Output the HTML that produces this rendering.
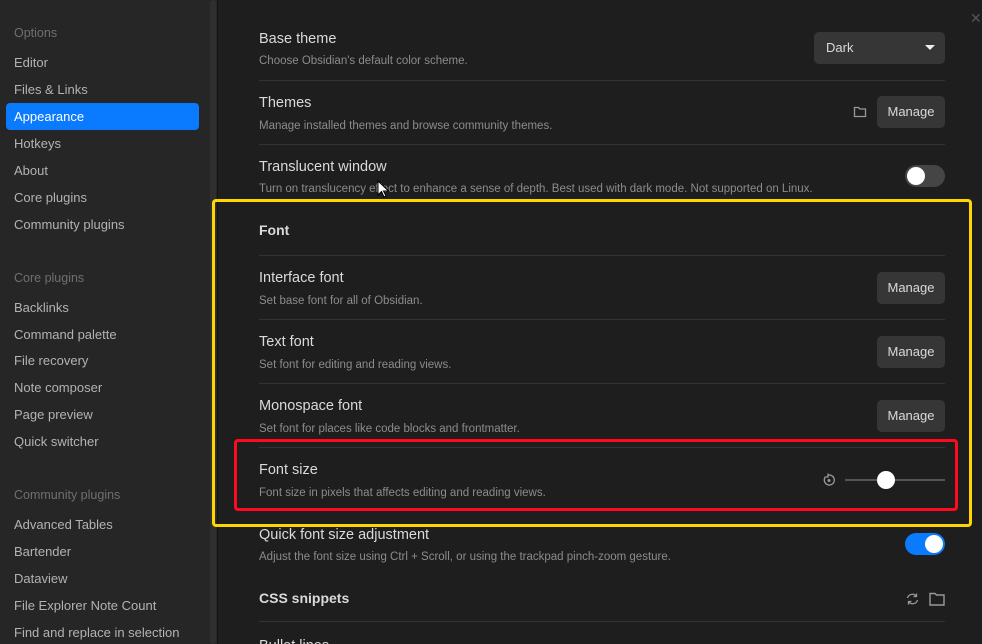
<!DOCTYPE html>
<html style="width:982px;height:644px;overflow:hidden"><head><meta charset="utf-8"><style>
*{margin:0;padding:0;box-sizing:border-box}
body{width:982px;height:644px;overflow:hidden;background:#1e1e1e;font-family:"Liberation Sans",sans-serif;position:relative}
#side{position:absolute;left:0;top:0;width:218px;height:644px;background:#262626;border-right:1px solid #141414}
#sb{position:absolute;left:210px;top:0;width:6px;height:644px;background:#2f2f2f;border-radius:3px}
.si{position:absolute;left:14px;font-size:13px;color:#b3b3b3;line-height:16px;transform:translateY(-7px);white-space:nowrap}
.sh{color:#6f6f6f;font-size:12.5px}
#hl{position:absolute;left:6px;top:103px;width:193px;height:27px;background:#0a7aff;border-radius:4px}
.t{position:absolute;left:259px;font-size:14.5px;color:#dadada;line-height:18px;transform:translateY(-8px);white-space:nowrap}
.d{position:absolute;left:259px;font-size:11.5px;color:#8c8c8c;line-height:14px;transform:translateY(-5px);white-space:nowrap}
.hr{position:absolute;left:259px;width:686px;height:1px;background:#333}
.btn{position:absolute;left:877px;width:68px;height:32px;background:#363636;border-radius:5px;color:#dadada;font-size:13px;line-height:32px;text-align:center}
.tog{position:absolute;left:905px;width:40px;height:22px;border-radius:11px;background:#454545}
.tog i{position:absolute;top:2px;width:18px;height:18px;border-radius:50%;background:#fff}
</style></head><body>
<div id="side"></div><div id="sb"></div>
<div id="hl"></div>
<div class="si sh" style="top:32px">Options</div>
<div class="si" style="top:62px">Editor</div>
<div class="si" style="top:89px">Files &amp; Links</div>
<div class="si" style="top:116px;color:#fff">Appearance</div>
<div class="si" style="top:143px">Hotkeys</div>
<div class="si" style="top:170px">About</div>
<div class="si" style="top:197px">Core plugins</div>
<div class="si" style="top:224px">Community plugins</div>
<div class="si sh" style="top:277px">Core plugins</div>
<div class="si" style="top:307px">Backlinks</div>
<div class="si" style="top:334px">Command palette</div>
<div class="si" style="top:360px">File recovery</div>
<div class="si" style="top:387px">Note composer</div>
<div class="si" style="top:414px">Page preview</div>
<div class="si" style="top:441px">Quick switcher</div>
<div class="si sh" style="top:494px">Community plugins</div>
<div class="si" style="top:524px">Advanced Tables</div>
<div class="si" style="top:551px">Bartender</div>
<div class="si" style="top:578px">Dataview</div>
<div class="si" style="top:605px">File Explorer Note Count</div>
<div class="si" style="top:632px">Find and replace in selection</div>

<div style="position:absolute;left:970px;top:10px;color:#555;font-size:14px">✕</div>

<div class="t" style="top:38px">Base theme</div>
<div class="d" style="top:59px">Choose Obsidian's default color scheme.</div>
<div style="position:absolute;left:814px;top:32px;width:131px;height:32px;background:#363636;border-radius:5px;color:#dadada;font-size:13px;line-height:32px;padding-left:12px">Dark<span style="position:absolute;right:10px;top:13px;border-left:5px solid transparent;border-right:5px solid transparent;border-top:5px solid #eee"></span></div>
<div class="hr" style="top:80px"></div>
<div class="t" style="top:102px">Themes</div>
<div class="d" style="top:124px">Manage installed themes and browse community themes.</div>
<svg style="position:absolute;left:853px;top:105px" width="14" height="13" viewBox="0 0 14 13"><path d="M1.5 2.5h4l1.5 1.5h5.5v7.5h-11z" fill="none" stroke="#999" stroke-width="1.3"/></svg>
<div class="btn" style="top:96px">Manage</div>
<div class="hr" style="top:144px"></div>
<div class="t" style="top:166px">Translucent window</div>
<div class="d" style="top:187px">Turn on translucency effect to enhance a sense of depth. Best used with dark mode. Not supported on Linux.</div>
<div class="tog" style="top:165px"><i style="left:2px"></i></div>

<div class="t" style="top:229px;font-weight:bold;font-size:14px">Font</div>
<div class="hr" style="top:255px"></div>
<div class="t" style="top:277px">Interface font</div>
<div class="d" style="top:299px">Set base font for all of Obsidian.</div>
<div class="btn" style="top:272px">Manage</div>
<div class="hr" style="top:319px"></div>
<div class="t" style="top:341px">Text font</div>
<div class="d" style="top:363px">Set font for editing and reading views.</div>
<div class="btn" style="top:336px">Manage</div>
<div class="hr" style="top:383px"></div>
<div class="t" style="top:405px">Monospace font</div>
<div class="d" style="top:427px">Set font for places like code blocks and frontmatter.</div>
<div class="btn" style="top:400px">Manage</div>
<div class="hr" style="top:447px"></div>
<div class="t" style="top:469px">Font size</div>
<div class="d" style="top:491px">Font size in pixels that affects editing and reading views.</div>
<svg style="position:absolute;left:822px;top:473px" width="14" height="14" viewBox="0 0 14 14"><path d="M3 4.5A5 5 0 1 0 6 2.2" fill="none" stroke="#999" stroke-width="1.3"/><path d="M6 0.5v3.5h-3.5" fill="none" stroke="#999" stroke-width="1.3"/><circle cx="7" cy="7.5" r="1.5" fill="#999"/></svg>
<div style="position:absolute;left:845px;top:479px;width:100px;height:2px;background:#555"></div>
<div style="position:absolute;left:877px;top:471px;width:18px;height:18px;border-radius:50%;background:#fff"></div>

<div style="position:absolute;left:234px;top:439px;width:724px;height:72px;border:3px solid #ff0a1e;border-radius:4px"></div>
<div style="position:absolute;left:212px;top:199px;width:760px;height:328px;border:3px solid #ffd600;border-radius:4px"></div>

<div class="t" style="top:534px">Quick font size adjustment</div>
<div class="d" style="top:555px">Adjust the font size using Ctrl + Scroll, or using the trackpad pinch-zoom gesture.</div>
<div class="tog" style="top:533px;background:#0a7aff"><i style="left:20px"></i></div>
<div class="t" style="top:597px;font-weight:bold;font-size:14px">CSS snippets</div>
<svg style="position:absolute;left:905px;top:592px" width="15" height="14" viewBox="0 0 15 14"><path d="M2.5 6A5 5 0 0 1 11.5 4.5M12.5 8A5 5 0 0 1 3.5 9.5M11.5 1.5v3h-3M3.5 12.5v-3h3" fill="none" stroke="#999" stroke-width="1.3"/></svg>
<svg style="position:absolute;left:929px;top:592px" width="16" height="14" viewBox="0 0 16 14"><path d="M1 1.5h5l1.5 1.5h7.5v10h-14z" fill="none" stroke="#999" stroke-width="1.4"/></svg>
<div class="hr" style="top:621px"></div>
<div class="t" style="top:645px">Bullet lines</div>
<svg style="position:absolute;left:377px;top:180px" width="12" height="18" viewBox="0 0 12 18"><path d="M1 1v14l3.5-3.5 2.5 5.5 2-1-2.5-5h5z" fill="#fff" stroke="#000" stroke-width="1"/></svg>
</body></html>
